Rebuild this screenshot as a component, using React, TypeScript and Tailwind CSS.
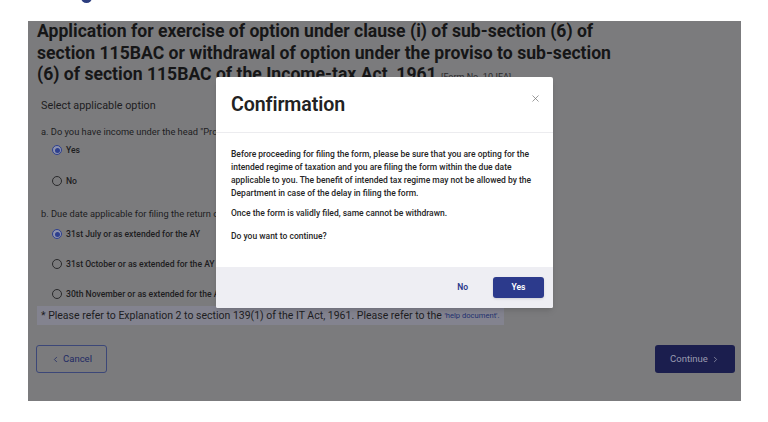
import React from 'react';
import { X, ChevronLeft, ChevronRight } from 'lucide-react';

// Dimmed page (behind a modal backdrop) with the Confirmation dialog on top.

const Radio: React.FC<{ checked?: boolean; label: string }> = ({ checked, label }) => (
    <div className="h-[10px] flex items-center gap-[4px] pl-[11px]">
        {checked ? (
            <span className="w-[10px] h-[10px] rounded-full border-[1.5px] border-[#2d3f8e] bg-[#8e93ad] flex items-center justify-center">
                <span className="w-[5px] h-[5px] rounded-full bg-[#2d3f8e]" />
            </span>
        ) : (
            <span className="w-[10px] h-[10px] rounded-full border-[1px] border-[#2a2a2c]" />
        )}
        <span className="text-[8.6px] leading-none font-medium text-[#1d1d1f]">{label}</span>
    </div>
);

const ConfirmDialog: React.FC = () => (
    <div className="absolute left-[188px] top-[56px] w-[337px] h-[231px] bg-white rounded-[2px] shadow-md flex flex-col overflow-hidden">
        {/* Header */}
        <div className="h-[56px] flex items-center justify-between pl-[15px] pr-[12px] border-b border-[#ececef]">
            <span className="text-[19.6px] font-semibold text-[#222] tracking-[-0.1px]">Confirmation</span>
            <X size={11} strokeWidth={1.6} className="text-[#777] -mt-[12px]" />
        </div>

        {/* Body */}
        <div className="flex-1 pl-[15px] pr-[6px] pt-[15px] text-[8.5px] leading-[13px] font-medium text-[#262626] whitespace-nowrap">
            <p>
                Before proceeding for filing the form, please be sure that you are opting for the<br />
                intended regime of taxation and you are filing the form within the due date<br />
                applicable to you. The benefit of intended tax regime may not be allowed by the<br />
                Department in case of the delay in filing the form.
            </p>
            <p className="mt-[7px]">Once the form is validly filed, same cannot be withdrawn.</p>
            <p className="mt-[10px]">Do you want to continue?</p>
        </div>

        {/* Footer */}
        <div className="h-[41px] bg-[#eeeef3] flex items-center justify-end gap-[25px] pr-[9px]">
            <button className="text-[8.5px] font-semibold text-[#2c3a8c]">No</button>
            <button className="w-[51px] h-[21px] rounded-[3px] bg-[#2c3a8c] text-white text-[8.5px] font-semibold shadow-sm">
                Yes
            </button>
        </div>
    </div>
);

export default function App() {
    return (
        <div className="w-[768px] h-[422px] bg-white font-['Roboto','Liberation_Sans',sans-serif] overflow-hidden">
            {/* cropped logo at the top */}
            <div className="h-[21px] overflow-hidden">
                <div className="ml-[81px] -mt-[8px] w-[11px] h-[11px] rounded-full bg-[#2c3e7f]" />
            </div>

            <div className="relative ml-[28px] w-[713px] h-[380px] bg-[#7b7b7d] text-[#161617] overflow-hidden">
                <h1 className="pl-[9px] text-[17.6px] leading-[21.5px] font-bold whitespace-nowrap">
                    Application for exercise of option under clause (i) of sub-section (6) of<br />
                    section 115BAC or withdrawal of option under the proviso to sub-section<br />
                    (6) of section 115BAC of the Income-tax Act, 1961{' '}
                    <span className="text-[9px] font-normal text-[#2a2a2c]">[Form No. 10-IEA]</span>
                </h1>

                <div className="pl-[13px] pt-[10px]">
                    <div className="text-[10.8px] leading-[13px] text-[#1d1d1f]">Select applicable option</div>
                    <div className="mt-[14px] text-[9.3px] leading-[11px] text-[#1d1d1f] whitespace-nowrap">
                        a. Do you have income under the head "Profits and gains of business or profession"?
                    </div>
                    <div className="mt-[8.5px] flex flex-col gap-[21px]">
                        <Radio checked label="Yes" />
                        <Radio label="No" />
                    </div>
                    <div className="mt-[21.5px] text-[9.3px] leading-[11px] text-[#1d1d1f] whitespace-nowrap">
                        b. Due date applicable for filing the return of income
                    </div>
                    <div className="mt-[10.5px] flex flex-col gap-[20px]">
                        <Radio checked label="31st July or as extended for the AY" />
                        <Radio label="31st October or as extended for the AY" />
                        <Radio label="30th November or as extended for the AY" />
                    </div>
                </div>

                <div className="ml-[9px] mt-[7px] w-[467px] h-[19px] bg-[#83838f] flex items-center pl-[4px] text-[10.5px] text-[#1d1d1f] whitespace-nowrap">
                    * Please refer to Explanation 2 to section 139(1) of the IT Act, 1961. Please refer to the&nbsp;
                    <span className="text-[7.6px] text-[#1f3170]">'help document'.</span>
                </div>

                <div className="flex justify-between items-center pl-[8px] pr-[6px] mt-[20px]">
                    <button className="w-[71px] h-[28px] rounded-[3px] border border-[#3c4778] flex items-center justify-center gap-[3px] text-[9.5px] text-[#1f2a64]">
                        <ChevronLeft size={9} strokeWidth={2} />
                        Cancel
                    </button>
                    <button className="w-[80px] h-[28px] rounded-[3px] bg-[#1b1e4e] flex items-center justify-center gap-[3px] text-[9.5px] text-[#9a9bb0]">
                        Continue
                        <ChevronRight size={9} strokeWidth={2} />
                    </button>
                </div>

                <ConfirmDialog />
            </div>
        </div>
    );
}
